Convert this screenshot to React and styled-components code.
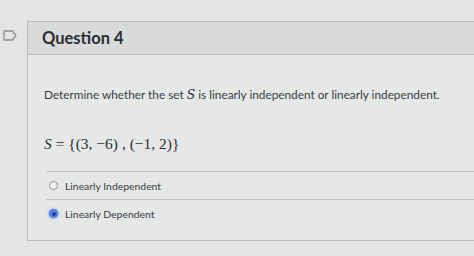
import React from "react";
import styled, { createGlobalStyle } from "styled-components";

const Global = createGlobalStyle`
  html, body { margin: 0; padding: 0; }
  body {
    width: 474px; height: 256px; overflow: hidden;
    background: #e3e5e4;
    font-family: Lato, "Noto Sans", sans-serif;
    color: #2d3035;
  }
`;

const Page = styled.div`
  display: flex;
  align-items: flex-start;
  padding-top: 21px;
`;

const Gutter = styled.div`
  width: 27px;
  display: flex;
  justify-content: flex-start;
  padding-top: 9px;
  padding-left: 3px;
  box-sizing: border-box;
  flex-shrink: 0;
`;

const Card = styled.div`
  flex: 1;
  border: 1px solid #b9bbba;
  border-right: none;
  background: #e6e8e7;
  height: 220px;
  box-sizing: border-box;
  display: flex;
  flex-direction: column;
`;

const Header = styled.div`
  height: 33px;
  background: #d9dbda;
  border-bottom: 1px solid #b9bbba;
  display: flex;
  align-items: center;
  padding-left: 14px;
  font-size: 16.5px;
  font-weight: 700;
  color: #2b2e33;
  box-sizing: border-box;
`;

const Body = styled.div`
  padding: 32px 0 0 16px;
  display: flex;
  flex-direction: column;
`;

const Prompt = styled.div`
  font-size: 11.8px;
  line-height: 16px;
  color: #3a3d42;
`;

const MathS = styled.span`
  font-family: "DejaVu Serif", "Liberation Serif", serif;
  font-style: italic;
  font-size: 12.5px;
  color: #2b2e33;
`;

const Formula = styled.div`
  margin-top: 32px;
  font-family: "Liberation Serif", "DejaVu Serif", serif;
  font-size: 15.5px;
  line-height: 18px;
  color: #2b2e33;
  white-space: pre;
`;

const Italic = styled.span`
  font-style: italic;
`;

const Answers = styled.div`
  margin-top: 18px;
  margin-left: 2px;
  display: flex;
  flex-direction: column;
`;

const Answer = styled.label`
  display: flex;
  align-items: center;
  gap: 7px;
  height: 27px;
  border-top: 1px solid #c3c5c4;
  padding-left: 3px;
  font-size: 10.4px;
  color: #3a3d42;
`;

const Radio = styled.span`
  width: 9px;
  height: 9px;
  border-radius: 50%;
  box-sizing: border-box;
  border: 1px solid ${p => (p.$checked ? "#3d6fd6" : "#8a8c8e")};
  background: ${p => (p.$checked ? "#5b8be6" : "#f2f3f3")};
  box-shadow: ${p => (p.$checked ? "0 0 2px 1px rgba(90,130,230,0.45)" : "none")};
  display: flex;
  align-items: center;
  justify-content: center;
  &::after {
    content: "";
    display: ${p => (p.$checked ? "block" : "none")};
    width: 4px;
    height: 4px;
    border-radius: 50%;
    background: #1c3a9a;
  }
`;

function Bookmark() {
  return (
    <svg width="14" height="11" viewBox="0 0 14 11">
      <path d="M1 1 H9.5 L12.8 5.5 L9.5 10 H1 Z" fill="none" stroke="#8e9092" strokeWidth="1.3" strokeLinejoin="round" />
    </svg>
  );
}

export default function App() {
  return (
    <>
      <Global />
      <Page>
        <Gutter>
          <Bookmark />
        </Gutter>
        <Card>
          <Header>Question 4</Header>
          <Body>
            <Prompt>
              Determine whether the set <MathS>S</MathS> is linearly independent or linearly independent.
            </Prompt>
            <Formula>
              <Italic>S</Italic> = {"{(3, −6) , (−1, 2)}"}
            </Formula>
            <Answers>
              <Answer>
                <Radio />
                Linearly Independent
              </Answer>
              <Answer>
                <Radio $checked />
                Linearly Dependent
              </Answer>
            </Answers>
          </Body>
        </Card>
      </Page>
    </>
  );
}
